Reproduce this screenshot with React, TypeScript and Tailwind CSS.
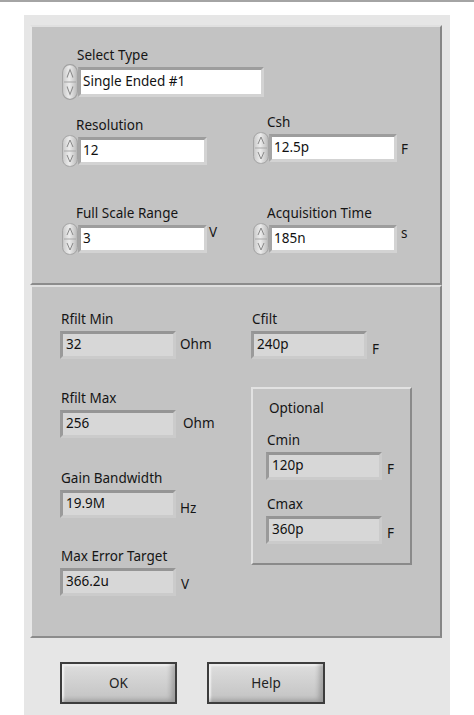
import { useId } from "react";

const font = "font-['Noto_Sans','DejaVu_Sans',sans-serif]";

const Spinner = ({ h }: { h: number }) => {
  const id = useId();
  return (
    <svg width={16} height={h} viewBox="0 0 16 32" preserveAspectRatio="none" className="shrink-0">
      <defs>
        <linearGradient id={id} x1="0" y1="0" x2="1" y2="0">
          <stop offset="0" stopColor="#c9c9c9" />
          <stop offset="0.45" stopColor="#ececec" />
          <stop offset="1" stopColor="#b9b9b9" />
        </linearGradient>
      </defs>
      <rect x="0.6" y="0.6" width="14.8" height="30.8" rx="7" fill={`url(#${id})`} stroke="#a2a2a2" strokeWidth="1" />
      <line x1="2" y1="16" x2="14" y2="16" stroke="#a8a8a8" strokeWidth="1" />
      <path d="M5 12 L8 5 L11 12" fill="none" stroke="#8a8a8a" strokeWidth="1" />
      <path d="M5 20 L8 27 L11 20" fill="none" stroke="#8a8a8a" strokeWidth="1" />
    </svg>
  );
};

// white numeric / text control with up-down arrows
const ControlField = ({ value, w, h = 28 }: { value: string; w: number; h?: number }) => (
  <div
    className="flex items-center border-[3px] border-t-[#9d9d9d] border-l-[#a5a5a5] border-r-[#d3d3d3] border-b-[#d3d3d3] bg-white pl-[2px] text-[13.5px] leading-none text-[#111]"
    style={{ width: w, height: h }}
  >
    {value}
  </div>
);

// grey read-only indicator
const IndicatorField = ({ value }: { value: string }) => (
  <div className="flex h-[28px] w-[116px] items-center border-[3px] border-t-[#959595] border-l-[#9a9a9a] border-r-[#cbcbcb] border-b-[#cbcbcb] bg-[#d7d7d7] pl-[3px] text-[13.5px] leading-none text-[#111]">
    {value}
  </div>
);

const Label = ({ text, className = "" }: { text: string; className?: string }) => (
  <div className={`h-[16px] text-[13.5px] leading-[16px] text-[#151515] ${className}`}>{text}</div>
);

const Unit = ({ text, className = "" }: { text: string; className?: string }) => (
  <div className={`text-[13.5px] leading-[16px] text-[#151515] ${className}`}>{text}</div>
);

const Button = ({ text, w }: { text: string; w: number }) => (
  <button
    className="flex h-[42px] items-center justify-center border-2 border-[#3d3d3d] bg-linear-to-b from-[#dedede] to-[#c2c2c2] text-[13.5px] text-[#222] shadow-[inset_-4px_-2px_5px_rgba(0,0,0,0.22),inset_2px_2px_2px_rgba(255,255,255,0.7)]"
    style={{ width: w }}
  >
    {text}
  </button>
);

export default function App() {
  return (
    <div className={`h-[715px] w-[474px] overflow-hidden bg-white ${font}`}>
      <div className="h-[2px] bg-[#a4a4a4]" />
      <div className="ml-[24px] mt-[13px] h-[700px] w-[426px] bg-[#e6e6e6] pl-[6px] pt-[10px]">
        {/* Top section: acquisition settings */}
        <div className="h-[260px] w-[412px] border-2 border-t-[#e0e0e0] border-l-[#e8e8e8] border-r-[#878787] border-b-[#8c8c8c] bg-[#c3c3c3]">
          <div className="ml-[30px] mt-[20px]">
            <Label text="Select Type" className="ml-[15px]" />
            <div className="mt-[1px] flex items-center">
              <Spinner h={36} />
              <ControlField value="Single Ended #1" w={186} h={30} />
            </div>
          </div>
          <div className="ml-[30px] flex">
            <div className="w-[191px]">
              <Label text="Resolution" className="ml-[14px] mt-[17px]" />
              <div className="mt-[2px] flex items-center">
                <Spinner h={32} />
                <ControlField value="12" w={129} />
              </div>
              <Label text="Full Scale Range" className="ml-[14px] mt-[38px]" />
              <div className="mt-[2px] flex items-center">
                <Spinner h={32} />
                <ControlField value="3" w={129} />
                <Unit text="V" className="ml-[2px] self-start mt-[1px]" />
              </div>
            </div>
            <div>
              <Label text="Csh" className="ml-[14px] mt-[14px]" />
              <div className="mt-[2px] flex items-center">
                <Spinner h={32} />
                <ControlField value="12.5p" w={128} />
                <Unit text="F" className="ml-[4px] self-start mt-[9px]" />
              </div>
              <Label text="Acquisition Time" className="ml-[14px] mt-[41px]" />
              <div className="mt-[2px] flex items-center">
                <Spinner h={32} />
                <ControlField value="185n" w={128} />
                <Unit text="s" className="ml-[4px] self-start mt-[2px]" />
              </div>
            </div>
          </div>
        </div>

        {/* Bottom section: computed results */}
        <div className="flex h-[353px] w-[412px] border-2 border-t-[#e0e0e0] border-l-[#e8e8e8] border-r-[#878787] border-b-[#8c8c8c] bg-[#c3c3c3]">
          <div className="ml-[28px] w-[191px]">
            <Label text="Rfilt Min" className="ml-[1px] mt-[24px]" />
            <div className="mt-[4px] flex items-start">
              <IndicatorField value="32" />
              <Unit text="Ohm" className="ml-[4px] mt-[5px]" />
            </div>
            <Label text="Rfilt Max" className="ml-[1px] mt-[31px]" />
            <div className="mt-[4px] flex items-start">
              <IndicatorField value="256" />
              <Unit text="Ohm" className="ml-[7px] mt-[5px]" />
            </div>
            <Label text="Gain Bandwidth" className="ml-[1px] mt-[32px]" />
            <div className="mt-[4px] flex items-start">
              <IndicatorField value="19.9M" />
              <Unit text="Hz" className="ml-[4px] mt-[10px]" />
            </div>
            <Label text="Max Error Target" className="ml-[1px] mt-[30px]" />
            <div className="mt-[4px] flex items-start">
              <IndicatorField value="366.2u" />
              <Unit text="V" className="ml-[5px] mt-[8px]" />
            </div>
          </div>
          <div>
            <Label text="Cfilt" className="ml-[1px] mt-[24px]" />
            <div className="mt-[4px] flex items-start">
              <IndicatorField value="240p" />
              <Unit text="F" className="ml-[5px] mt-[10px]" />
            </div>
            <div className="mt-[28px] h-[178px] w-[161px] border-2 border-t-[#e2e2e2] border-l-[#e2e2e2] border-r-[#8a8a8a] border-b-[#8a8a8a]">
              <Label text="Optional" className="ml-[16px] mt-[11px]" />
              <Label text="Cmin" className="ml-[14px] mt-[16px]" />
              <div className="ml-[13px] mt-[4px] flex items-start">
                <IndicatorField value="120p" />
                <Unit text="F" className="ml-[5px] mt-[9px]" />
              </div>
              <Label text="Cmax" className="ml-[14px] mt-[16px]" />
              <div className="ml-[13px] mt-[4px] flex items-start">
                <IndicatorField value="360p" />
                <Unit text="F" className="ml-[5px] mt-[9px]" />
              </div>
            </div>
          </div>
        </div>

        <div className="ml-[30px] mt-[24px] flex gap-[30px]">
          <Button text="OK" w={117} />
          <Button text="Help" w={118} />
        </div>
      </div>
    </div>
  );
}
